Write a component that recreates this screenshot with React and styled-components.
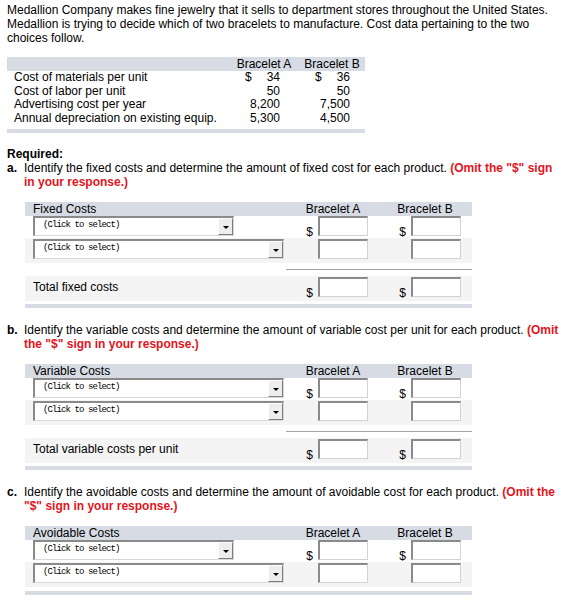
import { createGlobalStyle, styled } from "styled-components";

const GlobalStyle = createGlobalStyle`
  body {
    margin: 0;
    background: #ffffff;
    color: #000000;
    font-family: "Liberation Sans", Arial, sans-serif;
    font-size: 12px;
  }
`;

const Page = styled.div`
  padding: 3px 0 0 7px;
`;

const Intro = styled.p`
  margin: 0;
  line-height: 14px;
  white-space: nowrap;
`;

const DataTable = styled.div`
  margin-top: 12px;
  width: 358px;
`;

const DataRow = styled.div`
  display: grid;
  grid-template-columns: 222px 70px 66px;
  line-height: ${(p) => (p.$head ? "14px" : "13.5px")};
  background: ${(p) => (p.$head ? "#d6dbe4" : "transparent")};
`;

const DataLabel = styled.div`
  padding-left: 7px;
`;

const DataHeadCell = styled.div`
  text-align: center;
`;

const DataCell = styled.div`
  display: flex;
  justify-content: space-between;
  padding: 0 ${(p) => p.$pr}px 0 16px;
`;

const Band = styled.div`
  height: 4px;
  margin-top: ${(p) => p.$mt}px;
  background: #d6dbe4;
`;

const Required = styled.div`
  margin-top: 14px;
  line-height: 14px;
  font-weight: bold;
`;

const Question = styled.div`
  display: flex;
  line-height: 14px;
  margin-top: ${(p) => p.$mt || 0}px;
  white-space: nowrap;
`;

const Marker = styled.span`
  width: 17px;
  flex: none;
  font-weight: bold;
`;

const Note = styled.span`
  color: #e3141c;
  font-weight: bold;
`;

const AnswerTable = styled.div`
  margin: 13px 0 0 18px;
  width: 447px;
`;

const HeadRow = styled.div`
  display: grid;
  grid-template-columns: 263px 90px 94px;
  height: 14px;
  line-height: 14px;
  background: #d6dbe4;
`;

const HeadLabel = styled.div`
  padding-left: 8px;
`;

const HeadCol = styled.div`
  text-align: center;
`;

const Row = styled.div`
  display: grid;
  grid-template-columns: 263px 90px 94px;
  padding: ${(p) => (p.$first ? "0 0 2px" : "1px 0 4px")};
  background: ${(p) => (p.$shade ? "#f4f4f4" : "transparent")};
`;

const LabelCell = styled.div`
  padding-left: 8px;
  line-height: 20px;
`;

const SelectCell = styled.div`
  padding-left: 8px;
`;

const AmountCell = styled.div`
  display: flex;
  justify-content: flex-end;
  align-items: flex-end;
  padding-right: ${(p) => p.$pr}px;
`;

const Dollar = styled.span`
  line-height: 12px;
  margin: 0 5px -2px 0;
`;

const Input = styled.div`
  width: 50px;
  height: 20px;
  box-sizing: border-box;
  background: #ffffff;
  border-style: solid;
  border-width: 2px 1px 1px 2px;
  border-color: #8a8a8a #d2d2d2 #d2d2d2 #8a8a8a;
`;

const Select = styled.div`
  display: flex;
  width: ${(p) => p.$w}px;
  height: 20px;
  box-sizing: border-box;
  background: #ffffff;
  border-style: solid;
  border-width: 2px 1px 1px 2px;
  border-color: #8a8a8a #d8d8d8 #d8d8d8 #8a8a8a;
`;

const SelectText = styled.span`
  flex: 1;
  padding: 2px 0 0 8px;
  font-family: "Liberation Mono", monospace;
  font-size: 9px;
  letter-spacing: -0.9px;
  line-height: 11px;
`;

const SelectButton = styled.span`
  width: 15px;
  box-sizing: border-box;
  display: flex;
  align-items: center;
  justify-content: center;
  background: #ededed;
  border-style: solid;
  border-width: 1px;
  border-color: #ffffff #7d7d7d #7d7d7d #ffffff;

  &::after {
    content: "";
    border-left: 3px solid transparent;
    border-right: 3px solid transparent;
    border-top: 3px solid #000000;
    margin-top: 1px;
  }
`;

const Rule = styled.div`
  margin: 6px 0 6px 261px;
  height: 1px;
  background: #a3a3a3;
`;

const data = [
  ["Cost of materials per unit", "$", "34", "$", "36"],
  ["Cost of labor per unit", "", "50", "", "50"],
  ["Advertising cost per year", "", "8,200", "", "7,500"],
  ["Annual depreciation on existing equip.", "", "5,300", "", "4,500"],
];

const Dropdown = ({ w }) => (
  <Select $w={w}>
    <SelectText>(Click to select)</SelectText>
    <SelectButton />
  </Select>
);

const Amount = ({ pr, dollar }) => (
  <AmountCell $pr={pr}>
    {dollar ? <Dollar>$</Dollar> : null}
    <Input />
  </AmountCell>
);

const Answer = ({ title, firstWide, total }) => (
  <AnswerTable>
    <HeadRow>
      <HeadLabel>{title}</HeadLabel>
      <HeadCol>Bracelet A</HeadCol>
      <HeadCol>Bracelet B</HeadCol>
    </HeadRow>
    <Row $first>
      <SelectCell>
        <Dropdown w={firstWide ? 251 : 201} />
      </SelectCell>
      <Amount pr={10} dollar />
      <Amount pr={11} dollar />
    </Row>
    <Row $shade>
      <SelectCell>
        <Dropdown w={251} />
      </SelectCell>
      <Amount pr={10} />
      <Amount pr={11} />
    </Row>
    {total ? (
      <>
        <Rule />
        <Row $shade>
          <LabelCell>{total}</LabelCell>
          <Amount pr={10} dollar />
          <Amount pr={11} dollar />
        </Row>
      </>
    ) : null}
    <Band $mt={total ? 3 : 4} />
  </AnswerTable>
);

const App = () => {
  return (
    <>
      <GlobalStyle />
      <Page>
        <Intro>
          Medallion Company makes fine jewelry that it sells to department stores throughout the United States.
          <br />
          Medallion is trying to decide which of two bracelets to manufacture. Cost data pertaining to the two
          <br />
          choices follow.
        </Intro>

        <DataTable>
          <DataRow $head>
            <div />
            <DataHeadCell>Bracelet A</DataHeadCell>
            <DataHeadCell>Bracelet B</DataHeadCell>
          </DataRow>
          {data.map((r) => (
            <DataRow key={r[0]}>
              <DataLabel>{r[0]}</DataLabel>
              <DataCell $pr={19}>
                <span>{r[1]}</span>
                <span>{r[2]}</span>
              </DataCell>
              <DataCell $pr={15}>
                <span>{r[3]}</span>
                <span>{r[4]}</span>
              </DataCell>
            </DataRow>
          ))}
          <Band $mt={4} />
        </DataTable>

        <Required>Required:</Required>
        <Question>
          <Marker>a.</Marker>
          <span>
            Identify the fixed costs and determine the amount of fixed cost for each product.{" "}
            <Note>(Omit the "$" sign</Note>
            <br />
            <Note>in your response.)</Note>
          </span>
        </Question>
        <Answer title="Fixed Costs" total="Total fixed costs" />

        <Question $mt={15}>
          <Marker>b.</Marker>
          <span>
            Identify the variable costs and determine the amount of variable cost per unit for each product.{" "}
            <Note>(Omit</Note>
            <br />
            <Note>the "$" sign in your response.)</Note>
          </span>
        </Question>
        <Answer title="Variable Costs" firstWide total="Total variable costs per unit" />

        <Question $mt={15}>
          <Marker>c.</Marker>
          <span>
            Identify the avoidable costs and determine the amount of avoidable cost for each product.{" "}
            <Note>(Omit the</Note>
            <br />
            <Note>"$" sign in your response.)</Note>
          </span>
        </Question>
        <Answer title="Avoidable Costs" />
      </Page>
    </>
  );
};

export default App;
